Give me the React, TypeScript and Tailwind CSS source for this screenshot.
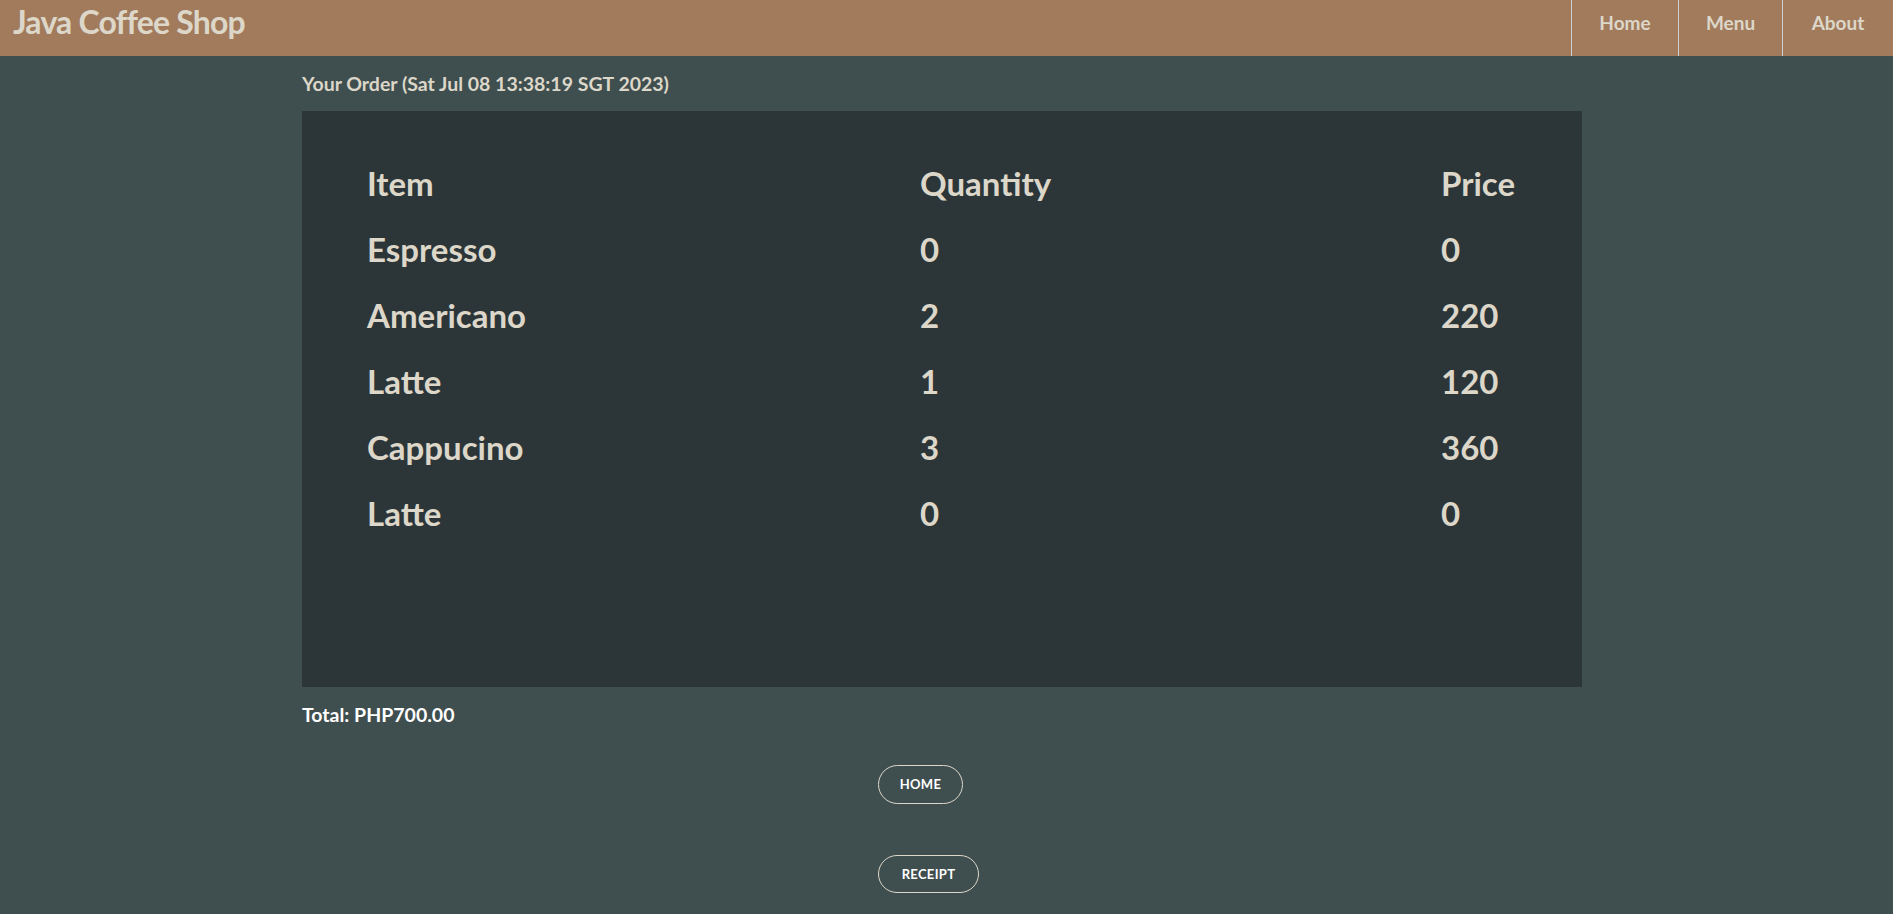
const rows = [
  { item: "Espresso", qty: 0, price: 0 },
  { item: "Americano", qty: 2, price: 220 },
  { item: "Latte", qty: 1, price: 120 },
  { item: "Cappucino", qty: 3, price: 360 },
  { item: "Latte", qty: 0, price: 0 },
];

export default function App() {
  return (
    <div
      className="min-h-screen bg-[#3F4E4F] text-[#DCD7C9]"
      style={{ fontFamily: "Lato, 'Open Sans', sans-serif" }}
    >
      {/* Top bar */}
      <header className="h-[56px] bg-[#A27B5C] flex items-start justify-between">
        <h1 className="pl-[13px] pt-[2px] text-[32px] leading-[40px] font-bold tracking-tight">
          Java Coffee Shop
        </h1>
        <nav className="flex h-full">
          <a className="h-full flex items-start pt-[9px] border-l border-[#cfcfcf] text-[19px] font-bold w-[107px] justify-center">
            Home
          </a>
          <a className="h-full flex items-start pt-[9px] border-l border-[#cfcfcf] text-[19px] font-bold w-[104px] justify-center">
            Menu
          </a>
          <a className="h-full flex items-start pt-[9px] border-l border-[#cfcfcf] text-[19px] font-bold w-[111px] justify-center">
            About
          </a>
        </nav>
      </header>

      <main className="pl-[302px]">
        <p className="pt-[13px] h-[55px] text-[19.5px] font-bold">
          Your Order (Sat Jul 08 13:38:19 SGT 2023)
        </p>

        {/* Order table */}
        <div className="w-[1280px] h-[576px] bg-[#2C3639] px-[65px] pt-[40px]">
          <div className="grid grid-cols-[553px_521px_1fr] text-[33px] font-bold">
            <div className="h-[66px] flex items-center">Item</div>
            <div className="h-[66px] flex items-center">Quantity</div>
            <div className="h-[66px] flex items-center">Price</div>
            {rows.map((r, i) => (
              <div key={i} className="contents">
                <div className="h-[66px] flex items-center">{r.item}</div>
                <div className="h-[66px] flex items-center">{r.qty}</div>
                <div className="h-[66px] flex items-center">{r.price}</div>
              </div>
            ))}
          </div>
        </div>

        <p className="pt-[13px] text-[19.5px] font-bold text-white">Total: PHP700.00</p>

        <div className="pl-[576px] pt-[36px] flex flex-col items-start gap-[51px]">
          <button className="h-[39px] w-[85px] rounded-full border border-[#DCD7C9] text-[13px] tracking-wide font-bold text-white">
            HOME
          </button>
          <button className="h-[38px] w-[101px] rounded-full border border-[#DCD7C9] text-[13px] tracking-wide font-bold text-white">
            RECEIPT
          </button>
        </div>
      </main>
    </div>
  );
}
